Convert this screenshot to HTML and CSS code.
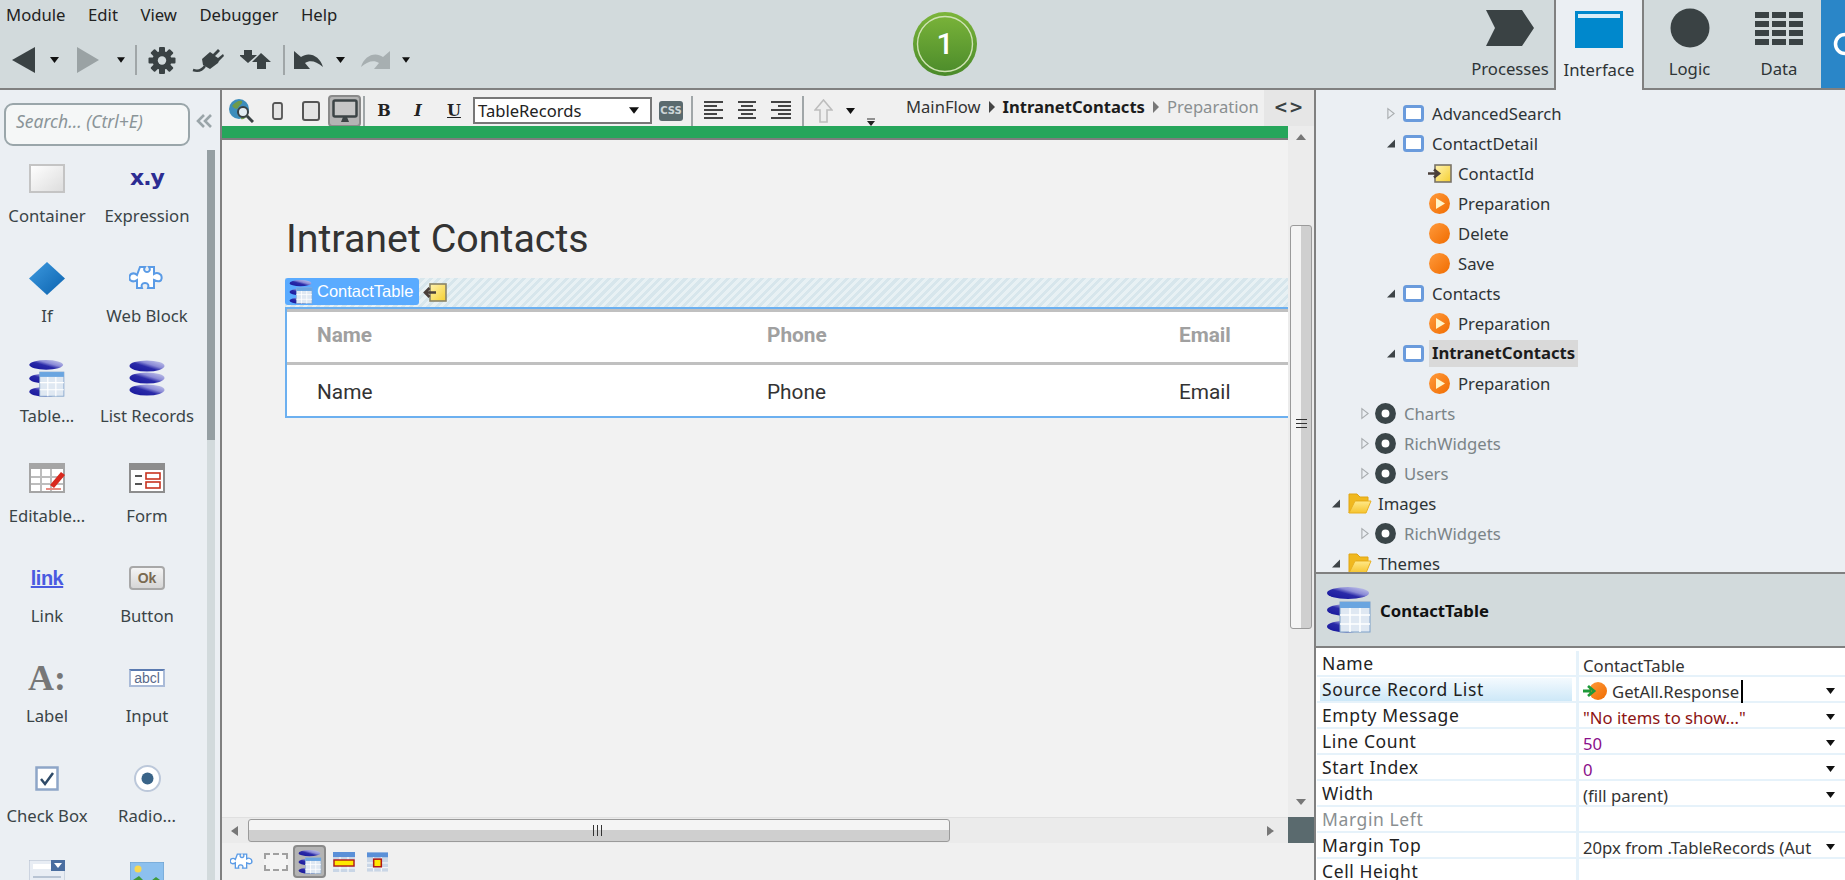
FILE: index.html
```html
<!DOCTYPE html>
<html lang="en">
<head>
<meta charset="utf-8">
<title>Service Studio</title>
<link rel="stylesheet" href="styles.css">
</head>
<body>
<svg class="sprite" xmlns="http://www.w3.org/2000/svg">
  <defs>
    <linearGradient id="gOrange" x1="0" y1="0" x2="1" y2="1"><stop offset="0" stop-color="#ff9a3c"/><stop offset="1" stop-color="#f06c00"/></linearGradient>
    <linearGradient id="gGreen" x1="0" y1="0" x2="0" y2="1"><stop offset="0" stop-color="#7cb53a"/><stop offset="1" stop-color="#4a8a2a"/></linearGradient>
    <linearGradient id="gBlue" x1="0" y1="0" x2="1" y2="1"><stop offset="0" stop-color="#3d9ae0"/><stop offset="1" stop-color="#0b62ae"/></linearGradient>
    <linearGradient id="gFolder" x1="0" y1="0" x2="0" y2="1"><stop offset="0" stop-color="#ffe98a"/><stop offset="1" stop-color="#f6c42e"/></linearGradient>
    <linearGradient id="gParam" x1="0" y1="0" x2="1" y2="1"><stop offset="0" stop-color="#fff3b0"/><stop offset="1" stop-color="#f5cf30"/></linearGradient>
    <linearGradient id="gDisc" x1="0" y1="1" x2="1" y2="0"><stop offset="0" stop-color="#14149a"/><stop offset=".45" stop-color="#2a2aa8"/><stop offset=".62" stop-color="#8a8ad6"/><stop offset="1" stop-color="#cfd2ee"/></linearGradient>
    <symbol id="i-screen" viewBox="0 0 21 17"><rect x="1.500" y="1.500" width="18" height="14" rx="2" fill="#fff" stroke="#6a9bdc" stroke-width="3"/></symbol>
    <symbol id="i-prep" viewBox="0 0 21 21"><circle cx="10.5" cy="10.5" r="10.5" fill="url(#gOrange)"/><path d="M7 5l9 5.5L7 16z" fill="#fff4c8"/></symbol>
    <symbol id="i-action" viewBox="0 0 21 21"><circle cx="10.5" cy="10.5" r="10.5" fill="url(#gOrange)"/></symbol>
    <symbol id="i-mod" viewBox="0 0 21 21"><circle cx="10.5" cy="10.5" r="7.2" fill="#fff" stroke="#3a4548" stroke-width="6.5"/></symbol>
    <symbol id="i-folder" viewBox="0 0 24 22"><path d="M1 21V2h8l3 3h8v4H8L1 21z" fill="#f0b81e" stroke="#e0a514"/><path d="M1 21l6-12h16l-5 12z" fill="url(#gFolder)" stroke="#e8b020"/></symbol>
    <symbol id="i-input" viewBox="0 0 24 19"><rect x="7" y="1" width="16" height="17" fill="url(#gParam)" stroke="#7a7468" stroke-width="1.6"/><path d="M0 9.5h9M6 5.5l5 4-5 4" fill="none" stroke="#4a3f3a" stroke-width="2.6"/></symbol>
    <symbol id="i-output" viewBox="0 0 24 19"><rect x="7" y="1" width="16" height="17" fill="url(#gParam)" stroke="#8a8468" stroke-width="1.6"/><path d="M13 9.5H3M6.500 5L2 9.500 6.500 14" fill="none" stroke="#4a3f3a" stroke-width="2.6"/></symbol>
    <symbol id="i-table" viewBox="0 0 44 46"><ellipse cx="21" cy="6" rx="21" ry="6" fill="url(#gDisc)"/><ellipse cx="20" cy="23" rx="20" ry="6" fill="url(#gDisc)"/><ellipse cx="20" cy="39.500" rx="20" ry="6" fill="url(#gDisc)"/><rect x="13" y="15" width="30" height="30" fill="#dfe8f2" stroke="#7da0c8"/><rect x="13" y="15" width="30" height="6" fill="#6aa5e0"/><path d="M13 28h30M13 37h30M23 21v24M33 21v24" stroke="#fff" stroke-width="1.5"/></symbol>
    <symbol id="i-caret" viewBox="0 0 9 6"><path d="M0 0h9L4.5 6z" fill="#111"/></symbol>
    <symbol id="i-open" viewBox="0 0 9 10"><path d="M9 0.5V9.5H0z" fill="#3e4447"/></symbol>
    <symbol id="i-closed" viewBox="0 0 9 13"><path d="M1 1l7 5.5-7 5.5z" fill="none" stroke="#a9adb0" stroke-width="1.3"/></symbol>
    <symbol id="i-puzzle" viewBox="0 0 36 26"><path d="M11 2h5c-2 3 0 5 2 5s4-2 2-5h5v7c3-2 5-1 7 1 1 2 1 5-1 6-2 1-4 0-6-1v8h-6c1-3 0-5-3-5s-4 2-3 5h-5v-8c-3 2-5 2-7 0-1-2-1-4 1-6 2-1 4-1 6 1z" fill="#fff" stroke="#5a9be6" stroke-width="2"/></symbol>
    <symbol id="i-row" viewBox="0 0 22 20"><rect width="22" height="20" fill="#c9d6e6"/><rect width="22" height="5" fill="#5a90d8"/><path d="M0 11h22M0 16h22M7 5v15M15 5v15" stroke="#fff"/><rect x="1" y="8" width="20" height="6" fill="#ffe800" stroke="#b01818" stroke-width="1.4"/></symbol>
  </defs>
</svg>

<div class="app">
  <header class="topbar">
    <div class="top-left">
      <nav class="menu"><span>Module</span><span>Edit</span><span>View</span><span>Debugger</span><span>Help</span></nav>
      <div class="quick">
        <svg class="q-back" width="23" height="26" viewBox="0 0 23 26"><path d="M23 0v26L0 13z" fill="#3a4244"/></svg>
        <svg class="q-caret" width="9" height="6"><use href="#i-caret"/></svg>
        <svg class="q-fwd" width="22" height="26" viewBox="0 0 22 26"><path d="M0 0v26l22-13z" fill="#9aa2a4"/></svg>
        <svg class="q-caret2" width="8" height="6"><use href="#i-caret"/></svg>
        <i class="sep q-sep1"></i>
        <svg class="q-gear" width="28" height="27" viewBox="0 0 28 27"><g fill="#3a4244"><circle cx="14" cy="13.5" r="9.5"/><rect x="11" y="0" width="6" height="27" rx="1"/><rect x="0.5" y="10.5" width="27" height="6" rx="1"/><rect x="11" y="0" width="6" height="27" rx="1" transform="rotate(45 14 13.5)"/><rect x="11" y="0" width="6" height="27" rx="1" transform="rotate(-45 14 13.5)"/></g><circle cx="14" cy="13.5" r="4.2" fill="#d2dadc"/></svg>
        <svg class="q-plug" width="32" height="24" viewBox="0 0 32 24"><path d="M1 22c6 2 10-1 12-4" fill="none" stroke="#3a4244" stroke-width="2.4"/><path d="M11 17l-1-6 8-7 3 2 5-5 2 2-5 5 3 2 5-4 1 2-5 5-1 2-8 6z" fill="#3a4244"/></svg>
        <svg class="q-sync" width="31" height="20" viewBox="0 0 31 20"><path d="M4 0h8v5h5l-9 8-9-8h5z" fill="#3a4244"/><path d="M21 3l10 9h-5v7h-9v-7h-5z" fill="#3a4244"/></svg>
        <i class="sep q-sep2"></i>
        <svg class="q-undo" width="30" height="20" viewBox="0 0 30 20"><path d="M1 1v18h16l-5-6c5-3 11-2 18 4C27 6 16 1 8 7z" fill="#3a4244"/></svg>
        <svg class="q-caret3" width="9" height="6"><use href="#i-caret"/></svg>
        <svg class="q-redo" width="31" height="20" viewBox="0 0 31 20"><path d="M30 1v18H14l5-6c-5-3-11-2-18 4C4 6 15 1 23 7z" fill="#a7afb1"/></svg>
        <svg class="q-caret4" width="8" height="6"><use href="#i-caret"/></svg>
      </div>
    </div>
    <div class="badge"><svg width="64" height="64" viewBox="0 0 64 64"><circle cx="32" cy="32" r="32" fill="url(#gGreen)"/><circle cx="32" cy="32" r="27.500" fill="none" stroke="#cfe3b4" stroke-width="1.4"/></svg><span class="badge-num">1</span></div>
    <div class="spring"></div>
    <div class="tabs">
      <div class="tab tab-proc"><svg width="48" height="36" viewBox="0 0 48 36"><path d="M0 0h36l12 18-12 18H0l9-18z" fill="#3a4244"/></svg><span>Processes</span></div>
      <div class="tab tab-active"><svg width="48" height="37" viewBox="0 0 48 37"><rect width="48" height="37" fill="#0088cc"/><rect x="3" y="3" width="42" height="4" fill="#d9eef8"/></svg><span>Interface</span></div>
      <div class="tab tab-logic"><svg width="40" height="40" viewBox="0 0 40 40"><circle cx="20" cy="20" r="19.5" fill="#3a4244"/></svg><span>Logic</span></div>
      <div class="tab tab-data"><svg width="48" height="33" viewBox="0 0 48 33"><g fill="#3a4244"><rect width="14" height="6"/><rect x="17" width="14" height="6"/><rect x="34" width="14" height="6"/><rect y="9" width="14" height="6"/><rect x="17" y="9" width="14" height="6"/><rect x="34" y="9" width="14" height="6"/><rect y="18" width="14" height="6"/><rect x="17" y="18" width="14" height="6"/><rect x="34" y="18" width="14" height="6"/><rect y="27" width="14" height="6"/><rect x="17" y="27" width="14" height="6"/><rect x="34" y="27" width="14" height="6"/></g></svg><span>Data</span></div>
      <div class="tab-blue"><svg width="12" height="24" viewBox="0 0 12 24"><path d="M12 2.5A9.5 9.5 0 0 0 12 21.500" fill="none" stroke="#fff" stroke-width="3.500"/></svg></div>
    </div>
  </header>

  <main class="workspace">
    <aside class="left">
      <div class="search-row">
        <div class="search">Search... (Ctrl+E)</div>
        <svg class="collapse" width="17" height="14" viewBox="0 0 17 14"><path d="M8 1L2 7l6 6M15 1L9 7l6 6" fill="none" stroke="#9aa5a9" stroke-width="2.6"/></svg>
      </div>
      <div class="palette-wrap">
        <div class="palette">
          <div class="pitem"><div class="pico"><svg width="36" height="29" viewBox="0 0 36 29"><defs><linearGradient id="gCont" x1="0" y1="0" x2="1" y2="1"><stop offset="0" stop-color="#fff"/><stop offset="1" stop-color="#dcdcdc"/></linearGradient></defs><rect x="1" y="1" width="34" height="27" fill="url(#gCont)" stroke="#c4c4c4" stroke-width="2"/></svg></div><span>Container</span></div>
          <div class="pitem"><div class="pico"><b class="xy">x.y</b></div><span>Expression</span></div>
          <div class="pitem"><div class="pico"><svg width="36" height="33" viewBox="0 0 36 33"><path d="M18 0l18 16.500L18 33 0 16.500z" fill="url(#gBlue)"/></svg></div><span>If</span></div>
          <div class="pitem"><div class="pico"><svg width="36" height="26"><use href="#i-puzzle"/></svg></div><span>Web Block</span></div>
          <div class="pitem"><div class="pico"><svg width="36" height="37"><use href="#i-table"/></svg></div><span>Table...</span></div>
          <div class="pitem"><div class="pico"><svg width="36" height="36" viewBox="0 0 36 36"><ellipse cx="18" cy="6" rx="17.500" ry="5.500" fill="url(#gDisc)"/><ellipse cx="18" cy="18" rx="17.500" ry="5.500" fill="url(#gDisc)"/><ellipse cx="18" cy="30" rx="17.500" ry="5.500" fill="url(#gDisc)"/></svg></div><span>List Records</span></div>
          <div class="pitem"><div class="pico"><svg width="36" height="30" viewBox="0 0 36 30"><rect width="36" height="30" fill="#a5a5a5"/><rect x="2" y="6" width="32" height="22" fill="#fff"/><path d="M2 14h32M2 21h32M12 6v22M22 6v22" stroke="#bdbdbd" stroke-width="2"/><path d="M21 22l11-13 4 3-11 13z" fill="#d8281e"/><path d="M17 26h15" stroke="#e88a80" stroke-width="2"/></svg></div><span>Editable...</span></div>
          <div class="pitem"><div class="pico"><svg width="36" height="30" viewBox="0 0 36 30"><rect width="36" height="30" fill="#8d8d8d"/><rect x="2" y="7" width="32" height="21" fill="#fff"/><path d="M6 13h7M6 21h7" stroke="#555" stroke-width="2"/><rect x="17" y="10" width="14" height="6" fill="#fff" stroke="#c8321e" stroke-width="1.600"/><rect x="17" y="19" width="14" height="6" fill="#fff" stroke="#c8321e" stroke-width="1.600"/></svg></div><span>Form</span></div>
          <div class="pitem"><div class="pico"><b class="linkico">link</b></div><span>Link</span></div>
          <div class="pitem"><div class="pico"><div class="okico">Ok</div></div><span>Button</span></div>
          <div class="pitem"><div class="pico"><b class="labelico">A:</b></div><span>Label</span></div>
          <div class="pitem"><div class="pico"><div class="abcico">abcl</div></div><span>Input</span></div>
          <div class="pitem"><div class="pico"><svg width="24" height="25" viewBox="0 0 24 25"><rect x="1.500" y="1.500" width="21" height="22" fill="#fff" stroke="#8ea6c8" stroke-width="2.500"/><path d="M6 13l4 5 8-11" fill="none" stroke="#2e4a68" stroke-width="2.500"/></svg></div><span>Check Box</span></div>
          <div class="pitem"><div class="pico"><svg width="27" height="27" viewBox="0 0 27 27"><circle cx="13.500" cy="13.500" r="12.500" fill="#fff" stroke="#bcc8da" stroke-width="2"/><circle cx="13.500" cy="13.500" r="6" fill="#3a6488"/></svg></div><span>Radio...</span></div>
          <div class="pitem"><div class="pico"><svg width="36" height="36" viewBox="0 0 36 36"><rect width="36" height="36" fill="#e8edf4" stroke="#b0bccc"/><rect x="4" y="4" width="18" height="5" fill="#fff"/><rect x="22" width="14" height="11" fill="#4a6ea0"/><path d="M25 3h8l-4 5z" fill="#fff"/><path d="M4 17h28M4 23h28M4 29h28" stroke="#b8c4d4" stroke-width="2"/></svg></div></div>
          <div class="pitem"><div class="pico"><svg width="34" height="32" viewBox="0 0 34 32"><rect width="34" height="32" fill="#8cc0ee" stroke="#6a9cc8"/><circle cx="8" cy="7" r="3.500" fill="#f8d850"/><path d="M0 32V20l9-6 8 8 9-7 8 6v11z" fill="#3f9a3a"/></svg></div></div>
        </div>
        <div class="pscroll"><div class="pthumb"></div></div>
      </div>
    </aside>

    <section class="center">
      <div class="toolbar">
        <svg class="t-world" width="25" height="24" viewBox="0 0 25 24"><circle cx="10" cy="10" r="10" fill="#3d8dbb"/><path d="M3 7c3-4 7-6 10-5 1 3-3 4-4 7-2 2-4 0-6-2zM12 16c3-2 6-2 7 0-2 3-5 5-7 4z" fill="#6f9a4a"/><circle cx="14" cy="13" r="5" fill="#e4edf2" stroke="#3a4244" stroke-width="2"/><path d="M18 17l6 6" stroke="#3a4244" stroke-width="3"/></svg>
        <svg class="t-phone" width="11" height="18" viewBox="0 0 11 18"><rect x="1" y="1" width="9" height="16" rx="2" fill="#e4e4e4" stroke="#555" stroke-width="1.800"/></svg>
        <svg class="t-tablet" width="18" height="20" viewBox="0 0 18 20"><rect x="1" y="1" width="16" height="18" rx="2" fill="#e4e4e4" stroke="#555" stroke-width="2"/></svg>
        <div class="t-active"><svg width="26" height="24" viewBox="0 0 26 24"><rect x="1.500" y="1.500" width="23" height="16" rx="1.500" fill="#c6c6c6" stroke="#3c4446" stroke-width="2.500"/><path d="M9 23l2-5h4l2 5z" fill="#3c4446"/></svg></div>
        <i class="sep t-sep1"></i>
        <b class="fmt fmt-b">B</b>
        <b class="fmt fmt-i">I</b>
        <b class="fmt fmt-u">U</b>
        <div class="select"><span>TableRecords</span><svg width="10" height="7"><use href="#i-caret"/></svg></div>
        <div class="cssbtn">CSS</div>
        <i class="sep t-sep2"></i>
        <svg class="t-a1" width="19" height="21" viewBox="0 0 19 21"><path d="M0 2h19M0 6h13M0 10h19M0 14h13M0 18h19" stroke="#444" stroke-width="2"/></svg>
        <svg class="t-a2" width="18" height="21" viewBox="0 0 18 21"><path d="M0 2h18M3 6h12M0 10h18M3 14h12M0 18h18" stroke="#444" stroke-width="2"/></svg>
        <svg class="t-a3" width="20" height="21" viewBox="0 0 20 21"><path d="M0 2h20M7 6h13M0 10h20M7 14h13M0 18h20" stroke="#444" stroke-width="2"/></svg>
        <i class="sep t-sep3"></i>
        <svg class="t-up" width="19" height="24" viewBox="0 0 19 24"><path d="M9.500 1L18 11h-5v12H6V11H1z" fill="#eee" stroke="#bdbdbd" stroke-width="1.600"/></svg>
        <svg class="t-c1" width="9" height="6"><use href="#i-caret"/></svg>
        <svg class="t-c2" width="8" height="8" viewBox="0 0 8 8"><path d="M0 1h8" stroke="#333"/><path d="M0 3h8L4 8z" fill="#222"/></svg>
        <div class="crumbs"><span>MainFlow</span><svg width="6" height="12" viewBox="0 0 6 12"><path d="M0 0l6 6-6 6z" fill="#444"/></svg><b>IntranetContacts</b><svg width="6" height="12" viewBox="0 0 6 12"><path d="M0 0l6 6-6 6z" fill="#777"/></svg><em>Preparation</em></div>
        <div class="codebtn">&lt;&gt;</div>
      </div>
      <div class="design">
        <div class="design-main">
          <div class="greenbar"></div>
          <div class="canvas">
            <h1>Intranet Contacts</h1>
            <div class="band">
              <div class="tag"><svg width="24" height="24"><use href="#i-table"/></svg><span>ContactTable</span></div>
              <svg class="band-input" width="24" height="19"><use href="#i-output"/></svg>
            </div>
            <div class="ctable">
              <div class="trow thead"><span class="c1">Name</span><span class="c2">Phone</span><span class="c3">Email</span></div>
              <div class="trow tbody"><span class="c1">Name</span><span class="c2">Phone</span><span class="c3">Email</span></div>
            </div>
          </div>
          <div class="hscroll">
            <svg class="hleft" width="7" height="10" viewBox="0 0 7 10"><path d="M7 0v10L0 5z" fill="#777"/></svg>
            <div class="hthumb"><div class="grip-h"></div></div>
            <svg class="hright" width="7" height="10" viewBox="0 0 7 10"><path d="M0 0v10l7-5z" fill="#777"/></svg>
          </div>
        </div>
        <div class="vscroll">
          <div class="vtop"><svg width="10" height="6" viewBox="0 0 10 6"><path d="M5 0l5 6H0z" fill="#777"/></svg></div>
          <div class="vthumb"><div class="grip-v"></div></div>
          <div class="vbot"><svg width="10" height="6" viewBox="0 0 10 6"><path d="M0 0h10L5 6z" fill="#777"/></svg></div>
          <div class="corner"></div>
        </div>
      </div>
      <div class="bottombar">
        <svg class="b-puzzle" width="24" height="19"><use href="#i-puzzle"/></svg>
        <div class="b-dash"></div>
        <div class="b-active"><svg width="24" height="24"><use href="#i-table"/></svg></div>
        <svg class="b-row" width="22" height="20"><use href="#i-row"/></svg>
        <svg class="b-cell" width="21" height="20" viewBox="0 0 22 20"><rect width="22" height="20" fill="#c9d6e6"/><rect width="22" height="5" fill="#5a90d8"/><path d="M0 11h22M0 16h22M7 5v15M15 5v15" stroke="#fff"/><rect x="7" y="7" width="8" height="8" fill="#ffe800" stroke="#b01818" stroke-width="1.600"/></svg>
      </div>
    </section>

    <aside class="right">
      <div class="tree">
        <div class="row lv-screen"><svg class="arrow" width="8" height="13"><use href="#i-closed"/></svg><svg width="21" height="17"><use href="#i-screen"/></svg><span>AdvancedSearch</span></div>
        <div class="row lv-screen"><svg class="arrow" width="8" height="9"><use href="#i-open"/></svg><svg width="21" height="17"><use href="#i-screen"/></svg><span>ContactDetail</span></div>
        <div class="row lv-leaf"><svg class="icon-input" width="24" height="19"><use href="#i-input"/></svg><span>ContactId</span></div>
        <div class="row lv-leaf"><svg width="21" height="21"><use href="#i-prep"/></svg><span>Preparation</span></div>
        <div class="row lv-leaf"><svg width="21" height="21"><use href="#i-action"/></svg><span>Delete</span></div>
        <div class="row lv-leaf"><svg width="21" height="21"><use href="#i-action"/></svg><span>Save</span></div>
        <div class="row lv-screen"><svg class="arrow" width="8" height="9"><use href="#i-open"/></svg><svg width="21" height="17"><use href="#i-screen"/></svg><span>Contacts</span></div>
        <div class="row lv-leaf"><svg width="21" height="21"><use href="#i-prep"/></svg><span>Preparation</span></div>
        <div class="row lv-screen"><svg class="arrow" width="8" height="9"><use href="#i-open"/></svg><svg width="21" height="17"><use href="#i-screen"/></svg><span class="current">IntranetContacts</span></div>
        <div class="row lv-leaf"><svg width="21" height="21"><use href="#i-prep"/></svg><span>Preparation</span></div>
        <div class="row lv-mod"><svg class="arrow" width="8" height="13"><use href="#i-closed"/></svg><svg width="21" height="21"><use href="#i-mod"/></svg><span>Charts</span></div>
        <div class="row lv-mod"><svg class="arrow" width="8" height="13"><use href="#i-closed"/></svg><svg width="21" height="21"><use href="#i-mod"/></svg><span>RichWidgets</span></div>
        <div class="row lv-mod"><svg class="arrow" width="8" height="13"><use href="#i-closed"/></svg><svg width="21" height="21"><use href="#i-mod"/></svg><span>Users</span></div>
        <div class="row lv-folder"><svg class="arrow" width="8" height="9"><use href="#i-open"/></svg><svg width="24" height="22"><use href="#i-folder"/></svg><span>Images</span></div>
        <div class="row lv-mod"><svg class="arrow" width="8" height="13"><use href="#i-closed"/></svg><svg width="21" height="21"><use href="#i-mod"/></svg><span>RichWidgets</span></div>
        <div class="row lv-folder"><svg class="arrow" width="8" height="9"><use href="#i-open"/></svg><svg width="24" height="22"><use href="#i-folder"/></svg><span>Themes</span></div>
      </div>
      <div class="prop-head"><svg width="44" height="46"><use href="#i-table"/></svg><b>ContactTable</b></div>
      <div class="props">
        <div class="prow"><div class="pk">Name</div><div class="pv"><span class="val">ContactTable</span></div></div>
        <div class="prow"><div class="pk"><span class="hl">Source Record List</span></div><div class="pv"><svg class="get" width="24" height="18" viewBox="0 0 24 18"><circle cx="15" cy="9" r="9" fill="url(#gOrange)"/><path d="M0 9h8M5 4l6 5-6 5" fill="none" stroke="#1e9a3a" stroke-width="2.800"/></svg><span class="val"><span class="typed">GetAll.Response</span></span><svg class="dd" width="9" height="6"><use href="#i-caret"/></svg></div></div>
        <div class="prow"><div class="pk">Empty Message</div><div class="pv"><span class="val v-str">"No items to show..."</span><svg class="dd" width="9" height="6"><use href="#i-caret"/></svg></div></div>
        <div class="prow"><div class="pk">Line Count</div><div class="pv"><span class="val v-num">50</span><svg class="dd" width="9" height="6"><use href="#i-caret"/></svg></div></div>
        <div class="prow"><div class="pk">Start Index</div><div class="pv"><span class="val v-num">0</span><svg class="dd" width="9" height="6"><use href="#i-caret"/></svg></div></div>
        <div class="prow"><div class="pk">Width</div><div class="pv"><span class="val">(fill parent)</span><svg class="dd" width="9" height="6"><use href="#i-caret"/></svg></div></div>
        <div class="prow"><div class="pk k-dim">Margin Left</div><div class="pv"></div></div>
        <div class="prow"><div class="pk">Margin Top</div><div class="pv"><span class="val">20px from .TableRecords (Aut</span><svg class="dd" width="9" height="6"><use href="#i-caret"/></svg></div></div>
        <div class="prow"><div class="pk">Cell Height</div><div class="pv"></div></div>
      </div>
    </aside>
  </main>
</div>
</body>
</html>
```

FILE: styles.css
```css
* { box-sizing: border-box; }
html, body { margin: 0; height: 100%; }
body {
  overflow: hidden;
  font-family: "Noto Sans", "Open Sans", sans-serif;
  font-size: 16.7px;
  color: #2e3436;
  background: #ebeff3;
}
svg { display: block; flex: none; }
.sprite { width: 0; height: 0; overflow: hidden; }

.app { display: flex; flex-direction: column; width: 1845px; height: 880px; }

/* top bar */
.topbar {
  display: flex;
  flex: none;
  height: 90px;
  background: #d2dadc;
  border-bottom: 2px solid #808080;
}
.top-left { width: 913px; flex: none; }
.menu { display: flex; gap: 22.500px; padding: 4px 0 0 6px; height: 44px; line-height: 22px; font-size: 16.7px; color: #222; }
.quick { display: flex; align-items: center; padding-left: 12px; height: 32px; }
.sep { display: block; flex: none; width: 2px; background: #a0a6a8; height: 30px; }
.q-caret { margin-left: 15px; }
.q-fwd { margin-left: 18px; }
.q-caret2 { margin-left: 18px; }
.q-sep1 { margin-left: 10px; }
.q-gear { margin-left: 11px; }
.q-plug { margin-left: 16px; }
.q-sync { margin-left: 16px; }
.q-sep2 { margin-left: 12px; }
.q-undo { margin-left: 8px; }
.q-caret3 { margin-left: 13px; }
.q-redo { margin-left: 15px; }
.q-caret4 { margin-left: 11px; }

.badge { display: grid; place-items: center; width: 64px; height: 64px; margin-top: 12px; flex: none; }
.badge > * { grid-area: 1 / 1; }
.badge-num { font: 500 30px/1 "Roboto", sans-serif; color: #fff; }
.spring { flex: 1; }

.tabs { display: flex; height: 90px; flex: none; }
.tab { display: flex; flex-direction: column; align-items: center; width: 88px; height: 88px; font-size: 16.7px; color: #2e3436; }
.tab span { margin-top: auto; line-height: 20px; padding-bottom: 9px; }
.tab-proc { padding-top: 10px; }
.tab-active { width: 90px; height: 90px; padding-top: 11px; background: #ebeff3; border-left: 2px solid #808080; border-right: 2px solid #808080; }
.tab-active span { padding-bottom: 10px; }
.tab-logic { width: 89px; padding: 8px 0 0 2px; }
.tab-data { padding: 12px 0 0 4px; }
.tab-blue { display: flex; align-items: center; justify-content: flex-end; width: 24px; height: 88px; background: #2a86c8; }

/* workspace */
.workspace { display: grid; grid-template-columns: 220px 1096px 529px; flex: 1; min-height: 0; margin-top: -2px; }
.workspace > * { min-height: 0; margin-top: 2px; }

/* left */
.left { display: flex; flex-direction: column; background: #ebeff3; overflow: hidden; }
.search-row { display: flex; align-items: center; height: 60px; padding: 9px 0 0 4px; flex: none; }
.search {
  width: 186px; height: 43px; padding-left: 10px;
  line-height: 33px; font-size: 17.500px; font-style: italic; color: #8a9498;
  white-space: nowrap;
  background: #f5f7f7; border: 2px solid #9aa6aa; border-radius: 9px;
}
.collapse { margin: -8px 0 0 6px; }
.palette-wrap { display: flex; flex: 1; min-height: 0; }
.palette { display: grid; grid-template-columns: 94px 106px; grid-auto-rows: 100px; width: 207px; flex: none; overflow: hidden; }
.pitem { display: flex; flex-direction: column; align-items: center; padding-top: 10px; font-size: 16.7px; color: #3a4447; white-space: nowrap; }
.pitem span { margin-top: 10px; line-height: 20px; }
.pico { display: flex; align-items: center; justify-content: center; height: 36px; }
.xy { font: 700 22px/1 "DejaVu Sans", sans-serif; color: #2c2c92; letter-spacing: -1px; }
.linkico { font: 700 20px/1 "Liberation Sans", sans-serif; color: #4a5ae0; text-decoration: underline; letter-spacing: -.5px; }
.okico { width: 36px; height: 24px; text-align: center; font: 700 14px/20px "Liberation Sans", sans-serif; color: #7a6a50; background: linear-gradient(#f4f4f4, #d6d6d6); border: 2px solid #a8a8a8; border-radius: 4px; }
.labelico { font: 700 36px/1 "Liberation Serif", serif; color: #777; }
.abcico { width: 36px; height: 18px; text-align: center; font: 400 14px/14px "Liberation Sans", sans-serif; color: #5a6a8a; background: #fff; border: 2px solid #aabbd8; border-top-color: #5a7ab0; }
.pscroll { width: 8px; flex: none; background: #d2dadc; }
.pthumb { height: 290px; background: #959fa3; }

/* center */
.center { display: flex; flex-direction: column; background: #f0f0f0; border-left: 2px solid #808080; border-right: 2px solid #808080; overflow: hidden; }
.toolbar { display: flex; align-items: center; flex: none; height: 36px; padding: 5px 0 0 7px; }
.t-phone { margin-left: 18px; }
.t-tablet { margin-left: 19px; }
.t-active { display: flex; align-items: center; justify-content: center; width: 33px; height: 32px; margin-left: 8px; background: #b4b4b4; border: 2px solid #8a8a8a; border-radius: 4px; }
.t-sep1 { margin-left: 2px; }
.fmt { width: 14px; margin-left: 12px; text-align: center; font: 700 16px/1 "DejaVu Serif", serif; color: #222; }
.fmt-i { font-style: italic; margin-left: 20px; }
.fmt-u { margin-left: 22px; text-decoration: underline; }
.select { display: flex; align-items: center; justify-content: space-between; width: 179px; height: 27px; margin-left: 12px; padding: 0 11px 0 3px; font-size: 16.6px; color: #222; background: #fff; border: 2px solid #777; }
.cssbtn { width: 24px; height: 20px; margin-left: 7px; text-align: center; font: 700 10px/20px "DejaVu Sans", sans-serif; color: #cdd5d8; background: #5a6a6e; border-radius: 3px; }
.t-sep2 { margin-left: 8px; }
.t-a1 { margin-left: 11px; }
.t-a2 { margin-left: 15px; }
.t-a3 { margin-left: 15px; }
.t-sep3 { margin-left: 11px; }
.t-up { margin-left: 10px; }
.t-c1 { margin-left: 13px; }
.t-c2 { margin-left: 12px; margin-top: 22px; }
.crumbs { display: flex; align-items: center; gap: 8px; margin-left: 31px; padding-bottom: 8px; font-size: 16.6px; color: #333; white-space: nowrap; }
.crumbs b { color: #1c1c1c; }
.crumbs em { font-style: normal; color: #8a8f91; }
.codebtn { align-self: flex-start; width: 50px; height: 36px; margin: -5px 0 0 auto; text-align: center; font: 700 17px/34px "DejaVu Sans", sans-serif; color: #3a4244; background: #e6e6e6; letter-spacing: 1px; }

.design { display: flex; flex: 1; min-height: 0; }
.design-main { display: flex; flex-direction: column; flex: 1; min-width: 0; }
.greenbar { flex: none; height: 14px; background: #26a65b; border-bottom: 2px solid #7d7d7d; }
.canvas { flex: 1; min-height: 0; padding-left: 63px; background: #f2f2f2; overflow: hidden; font-family: "Roboto", sans-serif; }
.canvas h1 { margin: 77px 0 17px 1px; font: 400 39.400px/44px "Roboto", sans-serif; color: #333; }
.band { display: flex; align-items: center; height: 29px; background: repeating-linear-gradient(135deg, #d7e6ec 0 3px, #e8f1f4 3px 6px); }
.tag { display: flex; align-items: center; gap: 4px; width: 134px; height: 27px; margin-top: -2px; padding-left: 4px; color: #fff; font: 400 16.500px/27px "Liberation Sans", sans-serif; background: #5aabff; border-radius: 3px; white-space: nowrap; }
.band-input { margin-left: 4px; }
.ctable { border: 2px solid #6cb0f0; border-right: 0; background: #fff; height: 111px; }
.trow { display: flex; align-items: center; font-size: 20.800px; }
.c1 { width: 480px; padding-left: 30px; flex: none; }
.c2 { width: 412px; flex: none; }
.thead { height: 56px; padding-bottom: 4px; font-weight: 700; color: #a0a0a0; border-top: 3px solid #c0c0c0; border-bottom: 3px solid #c0c0c0; }
.tbody { height: 52px; color: #333; padding-top: 1px; }

.hscroll { display: flex; align-items: center; flex: none; height: 26px; background: #ebebeb; border-top: 1px solid #e0e0e0; }
.hleft { margin-left: 9px; }
.hthumb { display: flex; align-items: center; justify-content: center; width: 702px; height: 23px; margin-left: 10px; background: linear-gradient(#f4f4f4 50%, #cfcfcf 50%); border: 1.500px solid #9a9a9a; border-radius: 3px; }
.grip-h { width: 12px; height: 11px; background: repeating-linear-gradient(90deg, #333 0 1.500px, transparent 1.500px 4px); }
.hright { margin-left: auto; margin-right: 14px; }

.vscroll { display: flex; flex-direction: column; flex: none; width: 26px; background: #ececec; }
.vtop { height: 99px; padding: 8px 0 0 8px; flex: none; }
.vthumb { display: flex; align-items: center; justify-content: center; width: 22px; height: 404px; margin-left: 2px; flex: none; background: linear-gradient(90deg, #f4f4f4 50%, #cfcfcf 50%); border: 1.500px solid #9a9a9a; border-radius: 3px; }
.grip-v { width: 11px; height: 12px; margin-top: -10px; background: repeating-linear-gradient(0deg, #333 0 1.500px, transparent 1.500px 4px); }
.vbot { flex: 1; display: flex; align-items: flex-end; padding: 0 0 12px 8px; }
.corner { flex: none; height: 26px; background: #5a6a6e; }

.bottombar { display: flex; align-items: center; flex: none; height: 37px; padding-left: 8px; }
.b-dash { width: 24px; height: 18px; margin-left: 10px; border: 2px dashed #a0a0a0; background: #f4f4f4; }
.b-active { display: flex; align-items: center; justify-content: center; width: 33px; height: 33px; margin-left: 5px; background: #b4b4b4; border: 2px solid #8a8a8a; border-radius: 4px; }
.b-row { margin-left: 7px; }
.b-cell { margin-left: 12px; }

/* right */
.right { display: flex; flex-direction: column; overflow: hidden; }
.tree { flex: none; height: 484px; padding-top: 8px; background: #ebeff3; overflow: hidden; font-size: 16.7px; border-bottom: 2px solid #808080; }
.row { display: flex; align-items: center; gap: 8px; height: 30px; white-space: nowrap; }
.lv-screen { padding-left: 71px; }
.lv-leaf { padding-left: 113px; }
.lv-mod { padding-left: 45px; color: #7b8487; }
.lv-mod .arrow { margin-right: -2px; }
.lv-folder { padding-left: 16px; }
.lv-folder span { margin-left: -2px; }
.icon-input { margin-right: -2px; margin-left: -1px; }
.current { margin: 0 0 0 -3px; padding: 2px 3px 3px 3px; line-height: 22px; font-weight: 700; color: #1c1c1c; background: #d9d9d9; }

.prop-head { display: flex; align-items: center; gap: 9px; flex: none; height: 74px; padding-left: 11px; background: #d2dadc; border-bottom: 2px solid #808080; }
.prop-head b { font-size: 16.7px; color: #111; }
.props { flex: 1; min-height: 0; overflow: hidden; background: #fff; padding: 3px 0 0 1px; }
.prow { display: flex; height: 26px; border-bottom: 2px solid #e6f2fa; font-size: 16.7px; line-height: 23px; }
.pk { width: 262px; flex: none; padding: 1px 0 0 5px; font-size: 17.500px; letter-spacing: .6px; border-right: 3px solid #e6f2fa; white-space: nowrap; color: #222; }
.k-dim { color: #8a8f91; }
.hl { display: block; width: 252px; margin-left: -2px; padding-left: 2px; background: linear-gradient(#f4fafe, #cde8f8); }
.pv { display: flex; align-items: center; flex: 1; min-width: 0; padding: 4px 10px 0 4px; }
.val { flex: 0 1 240px; width: 240px; white-space: nowrap; color: #333; }
.get { margin-right: 5px; }
.get + .val { flex-basis: 200px; width: 200px; }
.typed { border-right: 2px solid #000; padding-right: 2px; }
.v-str { color: #8c1414; }
.v-num { color: #8a0f8a; }
.dd { margin-left: auto; }
```
